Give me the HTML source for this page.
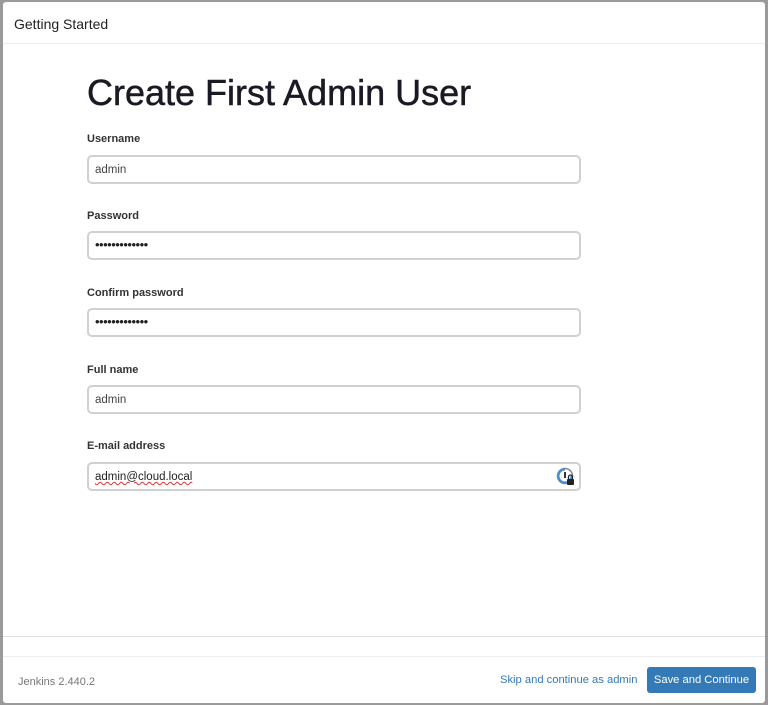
<!DOCTYPE html>
<html><head><meta charset="utf-8"><style>
*{box-sizing:border-box;margin:0;padding:0}
body{width:768px;height:705px;background:#9a9a9a;font-family:"Liberation Sans",sans-serif;position:relative;overflow:hidden}
.frame{position:absolute;left:3px;top:2px;width:762px;height:701px;background:#fff;border-radius:3px}
.hdr{position:absolute;left:0;top:0;width:100%;height:42px;border-bottom:1px solid #eee}
.hdr span{position:absolute;left:11px;top:14px;font-size:14px;color:#222}
h1{position:absolute;left:84px;top:70px;font-size:36px;font-weight:normal;color:#1a1a24;-webkit-text-stroke:0.5px #1a1a24}
.lbl{position:absolute;left:84px;font-size:11px;color:#333;font-weight:bold}
.inp{position:absolute;left:84px;width:494px;height:29px;border:2px solid #d0d0d0;border-radius:5px;font-size:11.5px;color:#444;padding:7px 0 0 6px}
.dots{font-size:13px;letter-spacing:-0.5px;padding-top:4px;color:#222}
.l1{position:absolute;left:0;top:634px;width:100%;border-top:1px solid #ddd}
.l2{position:absolute;left:0;top:654px;width:100%;border-top:1px solid #eee}
.ver{position:absolute;left:15px;top:674px;font-size:11px;color:#777}
.skip{position:absolute;left:497px;top:672px;font-size:11.2px;color:#337ab7}
.btn{position:absolute;left:644px;top:665px;width:109px;height:26px;background:#337ab7;border-radius:3px;color:#fff;font-size:11.2px;text-align:center;line-height:26px;white-space:nowrap}
</style></head><body>
<div class="frame">
<div class="hdr"><span>Getting Started</span></div>
<h1>Create First Admin User</h1>
<div class="lbl" style="top:131px">Username</div>
<div class="inp" style="top:153px">admin</div>
<div class="lbl" style="top:208px">Password</div>
<div class="inp dots" style="top:229px">•••••••••••••</div>
<div class="lbl" style="top:285px">Confirm password</div>
<div class="inp dots" style="top:306px">•••••••••••••</div>
<div class="lbl" style="top:362px">Full name</div>
<div class="inp" style="top:383px">admin</div>
<div class="lbl" style="top:438px">E-mail address</div>
<div class="inp" style="top:460px;color:#222"><span style="text-decoration:underline wavy #d33;text-decoration-thickness:1px">admin@cloud.local</span>
<svg style="position:absolute;right:3px;top:3px" width="20" height="20" viewBox="0 0 20 20"><circle cx="9" cy="9" r="7.5" fill="#fff" stroke="#888" stroke-width="1.5"/><path d="M9 2.5 A6.5 6.5 0 1 0 15.5 9" fill="none" stroke="#3b8de0" stroke-width="2"/><rect x="8" y="5" width="2" height="6" fill="#333"/><rect x="11" y="12" width="7" height="6" rx="1" fill="#222"/><path d="M12.5 12 v-2 a2 2 0 0 1 4 0 v2" fill="none" stroke="#222" stroke-width="1.3"/></svg></div>
<div class="l1"></div><div class="l2"></div>
<div class="ver">Jenkins 2.440.2</div>
<div class="skip">Skip and continue as admin</div>
<div class="btn">Save and Continue</div>
</div>
</body></html>
